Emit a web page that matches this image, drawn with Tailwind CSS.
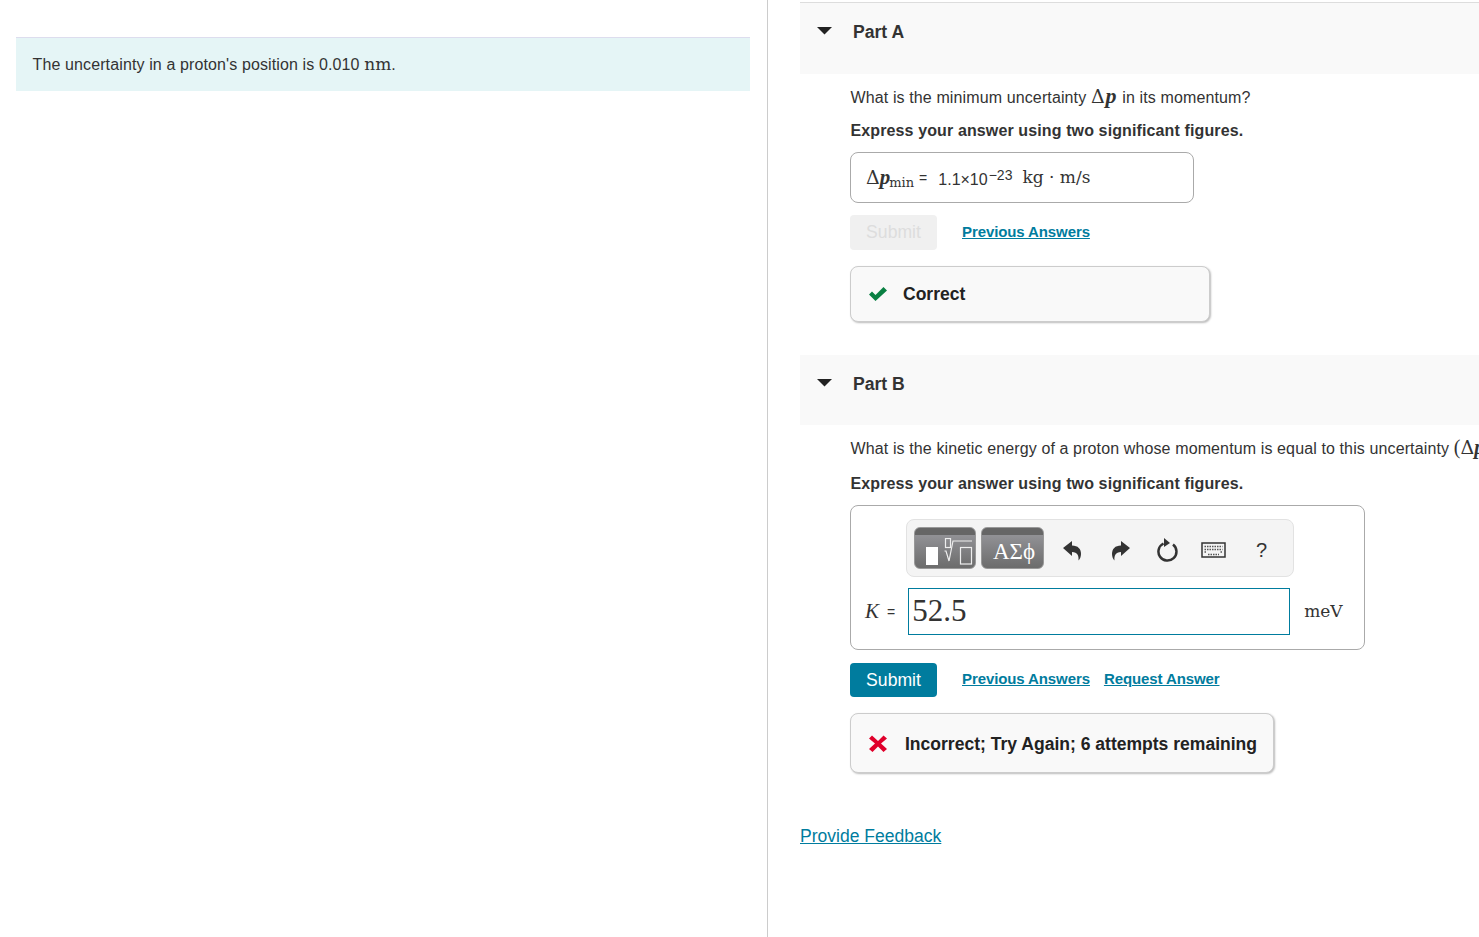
<!DOCTYPE html>
<html lang="en">
<head>
    <meta charset="UTF-8">
    <title>Part A and Part B</title>
    <script src="https://cdn.jsdelivr.net/npm/@tailwindcss/browser@4"></script>
</head>
<body class="bg-white overflow-hidden font-['Liberation_Sans',sans-serif] text-[#333]">
<div class="flex h-[937px] w-[1479px] overflow-hidden">

    <!-- Left column -->
    <div class="w-[768px] shrink-0 border-r border-[#ccc] pl-4 pr-[17px] pt-[37px]">
        <div class="h-[54px] bg-[#e5f5f6] border-t border-[#dde] pl-[16.500px] pt-4 text-base leading-[20px] tracking-[0.12px] whitespace-nowrap">
            The uncertainty in a proton's position is 0.010 <span class="font-['DejaVu_Serif',serif] text-[17px] tracking-normal">nm</span>.
        </div>
    </div>

    <!-- Right column -->
    <div class="w-[679px] shrink-0 ml-8 pt-[2px]">

        <!-- Part A -->
        <div class="h-[72px] bg-[#f9f9f9] border-t border-[#ddd] flex items-start pt-[18px] pl-[17px] w-[679px]">
            <svg class="mt-[5px]" width="15" height="9" viewBox="0 0 15 9"><path d="M0 1h15L7.500 8.500z" fill="#222"/></svg>
            <span class="ml-[21px] text-[17.600px] leading-[22px] font-bold">Part A</span>
        </div>
        <div class="pl-[50px]">
            <p class="mt-[11px] h-[22px] pl-[0.500px] text-base leading-[22px] tracking-[0.12px] whitespace-nowrap">What is the minimum uncertainty <span class="font-['DejaVu_Serif',serif] text-[19px] leading-none tracking-normal">Δ</span><i class="font-['Liberation_Serif',serif] text-[22px] leading-none font-bold ml-px mr-px">p</i> in its momentum?</p>
            <p class="mt-[13px] pl-[0.500px] text-base leading-[22px] font-bold tracking-[0.12px]">Express your answer using two significant figures.</p>

            <div class="mt-[10px] w-[344px] h-[51px] border border-[#aaa] rounded-lg flex items-center pl-[15px] text-base">
                <span class="font-['DejaVu_Serif',serif] text-[19px]">Δ</span><i class="font-['Liberation_Serif',serif] text-[21px] font-bold">p</i><span class="font-['DejaVu_Serif',serif] text-[13px] mt-[10px] -ml-px">min</span>
                <span class="ml-[5px] text-sm">=</span>
                <span class="ml-[11px] mt-[4px]">1.1×10<sup class="text-sm -top-[5px] ml-px relative align-baseline">−23</sup></span>
                <span class="ml-[10px] font-['DejaVu_Serif',serif] text-[17px]">kg · m/s</span>
            </div>

            <div class="mt-3 flex items-center">
                <div class="w-[87px] h-[35px] rounded-sm bg-[#f0f0f0] text-[#ddd] text-[17.600px] flex items-center justify-center">Submit</div>
                <a class="ml-[25px] font-bold text-[15px] text-[#007c9e] underline tracking-[-0.1px]">Previous Answers</a>
            </div>

            <div class="mt-4 w-[360px] h-[56px] bg-[#f9f9f9] border border-[#ccc] rounded-lg shadow-[1px_1px_2px_#bbb] flex items-center pl-[18px]">
                <svg width="18" height="14" viewBox="0 0 18 14"><path d="M0 7.500l3-3 3.500 3.500L14.500 0 18 3.500 6.500 14z" fill="#0a8043"/></svg>
                <span class="ml-4 text-[17.550px] font-bold text-[#222]">Correct</span>
            </div>
        </div>

        <!-- Part B -->
        <div class="mt-[33px] h-[70px] bg-[#f9f9f9] flex items-start pt-[18px] pl-[17px] w-[679px]">
            <svg class="mt-[5px]" width="15" height="9" viewBox="0 0 15 9"><path d="M0 1h15L7.500 8.500z" fill="#222"/></svg>
            <span class="ml-[21px] text-[17.600px] leading-[22px] font-bold">Part B</span>
        </div>
        <div class="pl-[50px]">
            <p class="mt-[12px] h-[22px] pl-[0.500px] text-base leading-[22px] tracking-[0.12px] whitespace-nowrap">What is the kinetic energy of a proton whose momentum is equal to this uncertainty <span class="font-['Liberation_Serif',serif] text-[20px] leading-none">(</span><span class="font-['DejaVu_Serif',serif] text-[19px] leading-none">Δ</span><i class="font-['Liberation_Serif',serif] text-[20px] leading-none font-bold">p</i></p>
            <p class="mt-[14px] pl-[0.500px] text-base leading-[22px] font-bold tracking-[0.12px]">Express your answer using two significant figures.</p>

            <div class="mt-[10px] w-[515px] h-[145px] border border-[#aaa] rounded-lg">
                <div class="mt-[13px] ml-[55px] w-[388px] h-[58px] bg-[#f4f4f4] border border-[#e2e2e2] rounded-lg flex items-center pl-[7px]">
                    <div class="relative w-[62px] h-[42px] rounded-md border border-[#999] bg-gradient-to-b from-[#9a9a9f] to-[#6c6c6c] overflow-hidden">
                        <div class="h-[7px] bg-[#666]"></div>
                        <div class="absolute left-[11px] top-[19px] w-[12px] h-[18px] bg-white"></div>
                        <svg class="absolute left-[29px] top-[10px]" width="31" height="30" viewBox="0 0 31 30" fill="none" stroke="#eee" stroke-width="1.200">
                            <rect x="1.500" y="0.500" width="5" height="9"/>
                            <path d="M0.500 13H2L5 23 9 3H28"/>
                            <rect x="16.500" y="9.500" width="11" height="16.500"/>
                        </svg>
                    </div>
                    <div class="ml-[5px] w-[63px] h-[42px] rounded-md border border-[#999] bg-gradient-to-b from-[#9a9a9f] to-[#6c6c6c] overflow-hidden relative">
                        <div class="h-[7px] bg-[#666]"></div>
                        <span class="absolute left-[3px] right-0 top-[9px] text-center text-[23px] leading-[30px] text-white font-['Liberation_Serif',serif]">ΑΣϕ</span>
                    </div>
                    <svg class="ml-[19px] mt-1" width="19" height="21" viewBox="0 0 19 21"><path d="M0 8L9 1v4.500c6 0 9 3.500 9 8.500 0 2.500-1 5-2.500 6.500 .5-5-1-8-6.500-8.500V16z" fill="#333"/></svg>
                    <svg class="ml-[29px] mt-1" width="19" height="21" viewBox="0 0 19 21"><path d="M19 8L10 1v4.500c-6 0-9 3.500-9 8.500 0 2.500 1 5 2.500 6.500-.5-5 1-8 6.500-8.500V16z" fill="#333"/></svg>
                    <svg class="ml-[26px] mt-1" width="22" height="24" viewBox="0 0 22 24" fill="none"><path d="M7.500 5.500A9 9 0 1 0 17 6.500" stroke="#333" stroke-width="2.500"/><path d="M8 0l6 5-6 4z" fill="#333"/></svg>
                    <svg class="ml-[23px] mt-1" width="25" height="16" viewBox="0 0 25 16" fill="none"><rect x="1" y="1" width="23" height="14" stroke="#333" stroke-width="1.500"/><path d="M3.500 4.500h18M3.500 7.500h18M3.500 10h2M7 12.500h11M19.500 10h2" stroke="#555" stroke-width="1.500" stroke-dasharray="1.500 1"/></svg>
                    <span class="ml-[30px] mt-[3px] text-[20px] text-[#333] leading-none">?</span>
                </div>
                <div class="mt-[11px] flex items-center pl-[14px]">
                    <i class="font-['Liberation_Serif',serif] text-[21px] w-[21px]">K</i>
                    <span class="ml-[1px] text-sm">=</span>
                    <div class="ml-[13px] w-[382px] h-[47px] border border-[#007c9e] pl-[3px] text-[31px] leading-[44px] font-['Liberation_Serif',serif]">52.5</div>
                    <span class="ml-[14px] font-['DejaVu_Serif',serif] text-[17px]">meV</span>
                </div>
            </div>

            <div class="mt-[13px] flex items-start">
                <div class="w-[87px] h-[34px] rounded-sm bg-[#007c9e] text-white text-[17.600px] flex items-center justify-center">Submit</div>
                <a class="ml-[25px] mt-[5px] font-bold text-[15px] text-[#007c9e] underline tracking-[-0.1px]">Previous Answers</a>
                <a class="ml-[14px] mt-[5px] font-bold text-[15px] text-[#007c9e] underline tracking-[-0.1px]">Request Answer</a>
            </div>

            <div class="mt-4 w-[424px] h-[60px] bg-[#f9f9f9] border border-[#ccc] rounded-lg shadow-[1px_1px_2px_#bbb] flex items-center pl-[18px]">
                <svg width="18" height="17" viewBox="0 0 18 17"><path d="M0 3.500L3 0.500 9 6l5.500-5.500L18 3.500 12 8.500l6 5.500-3.500 3L9 11.500 3.500 17 0 14l6-5.500z" fill="#e0002b"/></svg>
                <span class="ml-[18px] mt-[3px] text-[17.550px] font-bold text-[#222] whitespace-nowrap">Incorrect; Try Again; 6 attempts remaining</span>
            </div>
        </div>

        <a class="block mt-[50px] text-[17.550px] text-[#007c9e] underline">Provide Feedback</a>
    </div>
</div>
</body>
</html>
